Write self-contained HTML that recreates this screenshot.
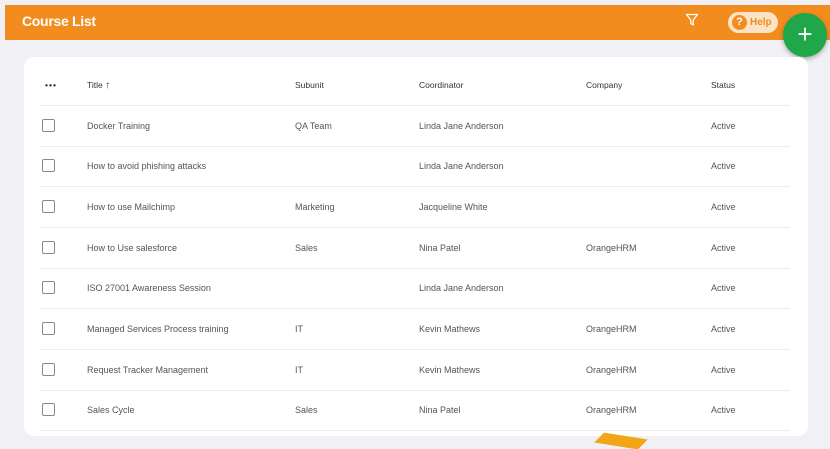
<!DOCTYPE html>
<html><head><style>
body{margin:0;width:830px;height:442px;background:#f1f1f5;font-family:"Liberation Sans",sans-serif;position:relative;overflow:hidden}
.bar{position:absolute;left:5px;top:5px;width:825px;height:35px;background:#f28c1e}
.bar h1{position:absolute;left:17px;top:8px;margin:0;font-size:14px;color:#fff;font-weight:bold;letter-spacing:-0.3px}
.help{position:absolute;left:728px;top:12px;width:50px;height:21px;border-radius:11px;background:#fbe3c6}
.help .q{position:absolute;left:4px;top:3px;width:15px;height:15px;border-radius:50%;background:#f28c1e;color:#fff;font-size:11px;font-weight:bold;text-align:center;line-height:15px}
.help span.t{position:absolute;left:22px;top:5px;font-size:10px;color:#f28c1e;font-weight:bold}
.fab{position:absolute;left:783px;top:13px;width:44px;height:44px;border-radius:50%;background:#20a74a;box-shadow:0 2px 5px rgba(0,0,0,.3);color:#fff;font-size:26px;text-align:center;line-height:42px}
.card{position:absolute;left:24px;top:57px;width:784px;height:379px;background:#fff;border-radius:10px}
.row{position:absolute;left:40px;width:750px;height:40px;border-bottom:1px solid #ececec;font-size:9px;color:#555}
.row div{position:absolute;top:15px}
.cb{left:2px!important;top:13px!important;width:11px;height:11px;border:1px solid #888;border-radius:2px}
.h{color:#333;font-size:8.5px}
</style></head><body>
<div class="bar"><h1>Course List</h1>
<svg style="position:absolute;left:680px;top:8px" width="14" height="14" viewBox="0 0 14 14"><path d="M1.5 1.5h11l-4.3 5.5v5l-2.4-1.5v-3.5z" fill="none" stroke="#fff" stroke-width="1.3" stroke-linejoin="round"/></svg>
</div>
<div class="help"><div class="q">?</div><span class="t">Help</span></div>
<div class="fab">+</div>
<div class="card"></div>
<div class="row h" style="top:65px"><div style="left:5px;top:15px;font-weight:bold;letter-spacing:1px">•••</div><div style="left:47px">Title <span style="font-size:10px">↑</span></div><div style="left:255px">Subunit</div><div style="left:379px">Coordinator</div><div style="left:546px">Company</div><div style="left:671px">Status</div></div>
<div class="row" style="top:106px"><div class="cb"></div><div style="left:47px">Docker Training</div><div style="left:255px">QA Team</div><div style="left:379px">Linda Jane Anderson</div><div style="left:671px">Active</div></div>
<div class="row" style="top:146px"><div class="cb"></div><div style="left:47px">How to avoid phishing attacks</div><div style="left:379px">Linda Jane Anderson</div><div style="left:671px">Active</div></div>
<div class="row" style="top:187px"><div class="cb"></div><div style="left:47px">How to use Mailchimp</div><div style="left:255px">Marketing</div><div style="left:379px">Jacqueline White</div><div style="left:671px">Active</div></div>
<div class="row" style="top:228px"><div class="cb"></div><div style="left:47px">How to Use salesforce</div><div style="left:255px">Sales</div><div style="left:379px">Nina Patel</div><div style="left:546px">OrangeHRM</div><div style="left:671px">Active</div></div>
<div class="row" style="top:268px"><div class="cb"></div><div style="left:47px">ISO 27001 Awareness Session</div><div style="left:379px">Linda Jane Anderson</div><div style="left:671px">Active</div></div>
<div class="row" style="top:309px"><div class="cb"></div><div style="left:47px">Managed Services Process training</div><div style="left:255px">IT</div><div style="left:379px">Kevin Mathews</div><div style="left:546px">OrangeHRM</div><div style="left:671px">Active</div></div>
<div class="row" style="top:350px"><div class="cb"></div><div style="left:47px">Request Tracker Management</div><div style="left:255px">IT</div><div style="left:379px">Kevin Mathews</div><div style="left:546px">OrangeHRM</div><div style="left:671px">Active</div></div>
<div class="row" style="top:390px"><div class="cb"></div><div style="left:47px">Sales Cycle</div><div style="left:255px">Sales</div><div style="left:379px">Nina Patel</div><div style="left:546px">OrangeHRM</div><div style="left:671px">Active</div></div>
<div style="position:absolute;left:596px;top:436px;width:50px;height:10px;background:#f2a516;transform:skewX(-40deg) rotate(8deg)"></div>
</body></html>
